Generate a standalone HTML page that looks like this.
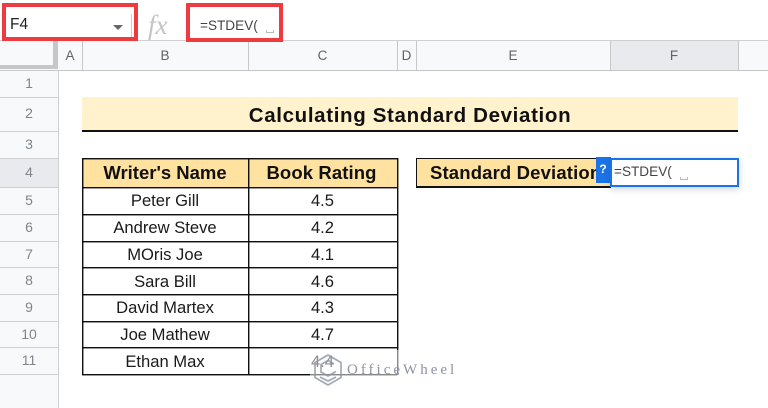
<!DOCTYPE html>
<html>
<head>
<meta charset="utf-8">
<style>
html,body{margin:0;padding:0;background:#fff}
#p{position:relative;width:768px;height:408px;overflow:hidden;background:#fff;font-family:"Liberation Sans",sans-serif;color:#111}
#p div{position:absolute;box-sizing:border-box}
.h{background:#f8f9fa}
.lv{width:1px;background:#c7c7c7}
.lh{height:1px;background:#d0d0d0}
.ch{top:41px;height:29px;line-height:29px;text-align:center;font-size:13.5px;color:#5f6368}
.rh{left:0;width:58px;text-align:center;font-size:14px;color:#80868b}
.c{text-align:center;font-size:16.6px;color:#1a1a1a;white-space:nowrap}
.bv{background:#111;width:1px;box-shadow:1px 0 0 rgba(0,0,0,.4)}
.bh{background:#111;height:1px;box-shadow:0 1px 0 rgba(0,0,0,.4)}
.t{text-align:center;font-weight:bold;font-size:18.5px;color:#111;white-space:nowrap}
</style>
</head>
<body>
<div id="p">
  <!-- header backgrounds -->
  <div class="h" style="left:0;top:40px;width:768px;height:30px"></div>
  <div class="h" style="left:0;top:40px;width:58px;height:368px"></div>
  <div style="left:610px;top:41px;width:128px;height:29px;background:#e8eaed"></div>
  <div style="left:0;top:158px;width:58px;height:29px;background:#e8eaed"></div>

  <!-- header lines -->
  <div class="lh" style="left:0;top:40px;width:768px"></div>
  <div class="lh" style="left:0;top:70px;width:768px;background:#c7c7c7"></div>
  <div style="left:0;top:65px;width:58px;height:4px;background:#c7c7c7"></div>
  <div style="left:53px;top:41px;width:5px;height:28px;background:#c7c7c7"></div>
  <div class="lv" style="left:58px;top:70px;height:338px;background:#d0d0d0"></div>
  <div class="lv" style="left:82px;top:41px;height:29px"></div>
  <div class="lv" style="left:248px;top:41px;height:29px"></div>
  <div class="lv" style="left:397px;top:41px;height:29px"></div>
  <div class="lv" style="left:416px;top:41px;height:29px"></div>
  <div class="lv" style="left:610px;top:41px;height:29px"></div>
  <div class="lv" style="left:738px;top:41px;height:29px"></div>

  <div class="ch" style="left:58px;width:24px">A</div>
  <div class="ch" style="left:82px;width:166px">B</div>
  <div class="ch" style="left:248px;width:149px">C</div>
  <div class="ch" style="left:397px;width:19px">D</div>
  <div class="ch" style="left:416px;width:194px">E</div>
  <div class="ch" style="left:610px;width:128px">F</div>

  <!-- row headers -->
  <div class="rh" style="top:71px;height:26px;line-height:24px">1</div>
  <div class="rh" style="top:97px;height:34px;line-height:33px">2</div>
  <div class="rh" style="top:131px;height:27px;line-height:27px">3</div>
  <div class="rh" style="top:158px;height:29px;line-height:29px">4</div>
  <div class="rh" style="top:187px;height:27px;line-height:26px">5</div>
  <div class="rh" style="top:214px;height:27px;line-height:26px">6</div>
  <div class="rh" style="top:241px;height:26px;line-height:26px">7</div>
  <div class="rh" style="top:267px;height:27px;line-height:26px">8</div>
  <div class="rh" style="top:294px;height:27px;line-height:26px">9</div>
  <div class="rh" style="top:321px;height:26px;line-height:26px">10</div>
  <div class="rh" style="top:347px;height:27px;line-height:26px">11</div>
  <div class="lh" style="left:0;top:97px;width:58px"></div>
  <div class="lh" style="left:0;top:131px;width:58px"></div>
  <div class="lh" style="left:0;top:158px;width:58px"></div>
  <div class="lh" style="left:0;top:187px;width:58px"></div>
  <div class="lh" style="left:0;top:214px;width:58px"></div>
  <div class="lh" style="left:0;top:241px;width:58px"></div>
  <div class="lh" style="left:0;top:267px;width:58px"></div>
  <div class="lh" style="left:0;top:294px;width:58px"></div>
  <div class="lh" style="left:0;top:321px;width:58px"></div>
  <div class="lh" style="left:0;top:347px;width:58px"></div>
  <div class="lh" style="left:0;top:374px;width:58px"></div>

  <!-- toolbar -->
  <div style="left:2px;top:3px;width:136px;height:38px;border:4px solid #ee3b3f"></div>
  <div style="left:186px;top:3px;width:97px;height:39px;border:4px solid #ee3b3f"></div>
  <div class="lv" style="left:131px;top:14px;height:23px;background:#ccc"></div>
  <div style="left:10px;top:15px;font-size:15.5px;line-height:20px;color:#222">F4</div>
  <div style="left:113px;top:25px;width:0;height:0;border-left:5.500px solid transparent;border-right:5.500px solid transparent;border-top:5px solid #666"></div>
  <div style="left:148px;top:10px;font-family:'Liberation Serif',serif;font-style:italic;font-size:27px;line-height:30px;color:#c4c4c4">fx</div>
  <div style="left:200px;top:17px;font-size:13.6px;line-height:18px;color:#444;white-space:nowrap">=STDEV(</div>
  <div style="left:266px;top:30px;width:8px;height:3px;border:1px solid #bbb;border-top:0"></div>

  <!-- title -->
  <div style="left:82px;top:97px;width:656px;height:33px;background:#fff2cc"></div>
  <div style="left:82px;top:130px;width:656px;height:2px;background:#111"></div>
  <div class="t" style="left:82px;top:102px;width:656px;font-size:20.5px;line-height:27px;letter-spacing:.65px">Calculating Standard Deviation</div>

  <!-- table -->
  <div style="left:82px;top:158px;width:315px;height:29px;background:#ffe29f"></div>
  <div class="t" style="left:82px;top:160px;width:166px;line-height:26px">Writer's Name</div>
  <div class="t" style="left:247px;top:160px;width:149px;line-height:26px;letter-spacing:.1px">Book Rating</div>

  <div class="c" style="left:82px;top:187px;width:166px;line-height:27px">Peter Gill</div>
  <div class="c" style="left:82px;top:214px;width:166px;line-height:27px">Andrew Steve</div>
  <div class="c" style="left:82px;top:241px;width:166px;line-height:27px">MOris Joe</div>
  <div class="c" style="left:82px;top:268px;width:166px;line-height:27px">Sara Bill</div>
  <div class="c" style="left:82px;top:294px;width:166px;line-height:27px">David Martex</div>
  <div class="c" style="left:82px;top:321px;width:166px;line-height:27px">Joe Mathew</div>
  <div class="c" style="left:82px;top:348px;width:166px;line-height:27px">Ethan Max</div>

  <div class="c" style="left:248px;top:187px;width:149px;line-height:27px">4.5</div>
  <div class="c" style="left:248px;top:214px;width:149px;line-height:27px">4.2</div>
  <div class="c" style="left:248px;top:241px;width:149px;line-height:27px">4.1</div>
  <div class="c" style="left:248px;top:268px;width:149px;line-height:27px">4.6</div>
  <div class="c" style="left:248px;top:294px;width:149px;line-height:27px">4.3</div>
  <div class="c" style="left:248px;top:321px;width:149px;line-height:27px">4.7</div>
  <div class="c" style="left:248px;top:348px;width:149px;line-height:27px">4.4</div>

  <div class="bh" style="left:82px;top:158px;width:315px"></div>
  <div class="bh" style="left:82px;top:187px;width:315px"></div>
  <div class="bh" style="left:82px;top:214px;width:315px"></div>
  <div class="bh" style="left:82px;top:241px;width:315px"></div>
  <div class="bh" style="left:82px;top:267px;width:315px"></div>
  <div class="bh" style="left:82px;top:294px;width:315px"></div>
  <div class="bh" style="left:82px;top:321px;width:315px"></div>
  <div class="bh" style="left:82px;top:347px;width:315px"></div>
  <div class="bh" style="left:82px;top:374px;width:315px"></div>
  <div class="bv" style="left:82px;top:158px;height:217px"></div>
  <div class="bv" style="left:248px;top:158px;height:217px"></div>
  <div class="bv" style="left:397px;top:158px;height:217px"></div>

  <!-- standard deviation cell -->
  <div style="left:416px;top:158px;width:195px;height:30px;background:#ffe29f;border:1px solid #111;border-bottom-width:2px;border-right:0"></div>
  <div class="t" style="left:430px;top:160px;line-height:26px;letter-spacing:.15px">Standard Deviation</div>
  <div style="left:596px;top:157px;width:15px;height:26px;background:#1a73e8;color:#fff;font-weight:bold;font-size:12px;line-height:24px;text-align:center;padding-right:1px">?</div>
  <div style="left:610px;top:158px;width:129px;height:29px;background:#fff;border:2px solid #1a73e8;box-shadow:0 2px 6px rgba(60,64,67,.25)"></div>
  <div style="left:614px;top:163px;font-size:13.6px;line-height:18px;color:#444;white-space:nowrap">=STDEV(</div>
  <div style="left:680px;top:177px;width:8px;height:3px;border:1px solid #bbb;border-top:0"></div>

  <!-- watermark -->
  <div style="left:310px;top:350px;width:150px;height:36px;background:rgba(255,255,255,.5)"></div>
  <svg style="position:absolute;left:312px;top:353px" width="32" height="34" viewBox="0 0 32 34" fill="none" stroke="#8d93a3" stroke-width="1.700" opacity=".8">
    <path d="M16 2 L29 9.500 V24.500 L16 32 L3 24.500 V9.500 Z"/>
    <path d="M22 11 L16 7.500 L9 11.500 V19 L16 23 L24 18.500"/>
    <path d="M8 24 L16 28 L24 24"/>
  </svg>
  <div style="left:347px;top:361px;font-family:'Liberation Serif',serif;font-size:15px;line-height:18px;letter-spacing:3px;color:#8d93a3;white-space:nowrap">OfficeWheel</div>
</div>
</body>
</html>
